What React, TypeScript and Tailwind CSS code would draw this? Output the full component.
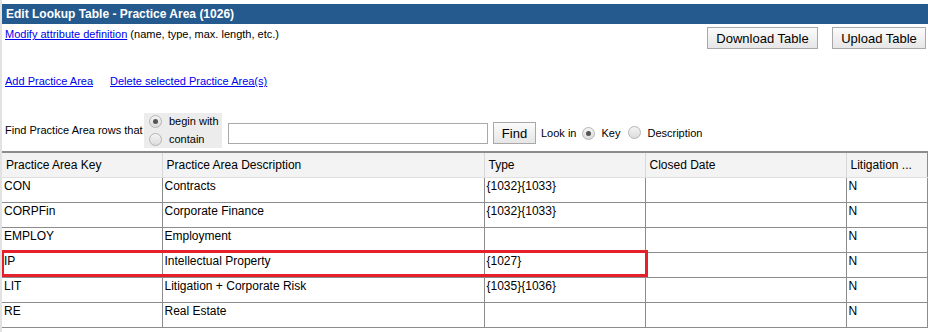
import React from "react";

interface Row {
  key: string;
  desc: string;
  type: string;
  closed: string;
  lit: string;
}

const rows: Row[] = [
  { key: "CON", desc: "Contracts", type: "{1032}{1033}", closed: "", lit: "N" },
  { key: "CORPFin", desc: "Corporate Finance", type: "{1032}{1033}", closed: "", lit: "N" },
  { key: "EMPLOY", desc: "Employment", type: "", closed: "", lit: "N" },
  { key: "IP", desc: "Intellectual Property", type: "{1027}", closed: "", lit: "N" },
  { key: "LIT", desc: "Litigation + Corporate Risk", type: "{1035}{1036}", closed: "", lit: "N" },
  { key: "RE", desc: "Real Estate", type: "", closed: "", lit: "N" },
];

function Radio({ checked }: { checked?: boolean }) {
  return (
    <span className="inline-flex items-center justify-center w-[13px] h-[13px] rounded-full border border-[#b5b5b5] bg-gradient-to-b from-[#f4f4f4] to-[#dcdcdc] shrink-0">
      {checked && <span className="w-[5px] h-[5px] rounded-full bg-[#555]" />}
    </span>
  );
}

function Btn({ children, className = "" }: { children: React.ReactNode; className?: string }) {
  return (
    <button
      className={
        "h-[22px] border border-[#a8a8a8] bg-gradient-to-b from-[#fbfbfb] to-[#e6e6e6] text-[13px] text-black leading-none " +
        className
      }
    >
      {children}
    </button>
  );
}

export default function App() {
  return (
    <div className="w-[928px] h-[332px] overflow-hidden bg-white border-l-2 border-[#e2e2e2] font-['Liberation_Sans',Arial,sans-serif] text-black">
      <div className="pt-1">
        <div className="h-5 bg-[#255a8e] text-white font-bold text-[12px] leading-5 pl-1">
          Edit Lookup Table - Practice Area (1026)
        </div>
      </div>

      <div className="flex justify-between items-start pr-[2px]">
        <div className="pl-[3px] pt-[4px] text-[11px] leading-[13px]">
          <a href="#" className="text-[#0000ee] underline">Modify attribute definition</a>{" "}
          (name, type, max. length, etc.)
        </div>
        <div className="flex gap-[14px] pt-[3px]">
          <Btn className="w-[111px]">Download Table</Btn>
          <Btn className="w-[94px]">Upload Table</Btn>
        </div>
      </div>

      <div className="pl-[3px] pt-[26px] flex gap-[17px] text-[11px] leading-[13px]">
        <a href="#" className="text-[#0000ee] underline">Add Practice Area</a>
        <a href="#" className="text-[#0000ee] underline">Delete selected Practice Area(s)</a>
      </div>

      <div className="flex items-center pl-[3px] pt-[25px] text-[11px] leading-[13px]">
        <span className="w-[139px]">Find Practice Area rows that</span>
        <div className="w-[78px] h-[35px] bg-[#ececec] flex flex-col justify-center gap-[5px] pl-[5px]">
          <label className="flex items-center gap-[7px]">
            <Radio checked />
            <span>begin with</span>
          </label>
          <label className="flex items-center gap-[7px]">
            <Radio />
            <span>contain</span>
          </label>
        </div>
        <input className="ml-[6px] w-[260px] h-[21px] border border-[#a9a9a9] mt-[5px]" />
        <Btn className="ml-[5px] w-[43px] h-[21px] mt-[5px] text-[13px]">Find</Btn>
        <div className="ml-[5px] mt-[6px] flex items-center gap-[6px]">
          <span>Look in</span>
          <Radio checked />
          <span>Key</span>
          <span className="ml-[2px]"><Radio /></span>
          <span>Description</span>
        </div>
      </div>

      <table className="mt-[3px] border-collapse text-[12px] leading-[14px] table-fixed w-[925px]">
        <colgroup>
          <col className="w-[160px]" />
          <col className="w-[322px]" />
          <col className="w-[161px]" />
          <col className="w-[201px]" />
          <col className="w-[81px]" />
        </colgroup>
        <thead>
          <tr className="h-[25px] bg-[#f3f3f3] border-t-2 border-[#8c8c8c]">
            {["Practice Area Key", "Practice Area Description", "Type", "Closed Date", "Litigation ..."].map((h, i) => (
              <th
                key={h}
                className={
                  "font-normal text-left align-middle pl-[4px] border-b border-[#e0e0e0] " +
                  (i < 4 ? "border-r border-r-[#d8d8d8] " : "border-r border-r-[#8c8c8c] ")
                }
              >
                {h}
              </th>
            ))}
          </tr>
        </thead>
        <tbody>
          {rows.map((r) => {
            const hl = r.key === "IP";
            return (
              <tr key={r.key} className="h-[25px]">
                {[r.key, r.desc, r.type, r.closed, r.lit].map((c, i) => (
                  <td
                    key={i}
                    className={
                      "align-top pt-[1px] pl-[2px] border-b border-b-[#8c8c8c] relative " +
                      (i > 0 ? "border-l border-l-[#8c8c8c] " : "") +
                      (i === 4 ? "border-r border-r-[#8c8c8c]" : "")
                    }
                  >
                    {c}
                    {hl && i === 0 && (
                      <span className="absolute left-0 top-[-3px] w-[646px] h-[27px] border-[3px] border-l-2 border-[#e5202b] pointer-events-none" />
                    )}
                  </td>
                ))}
              </tr>
            );
          })}
        </tbody>
      </table>
    </div>
  );
}
